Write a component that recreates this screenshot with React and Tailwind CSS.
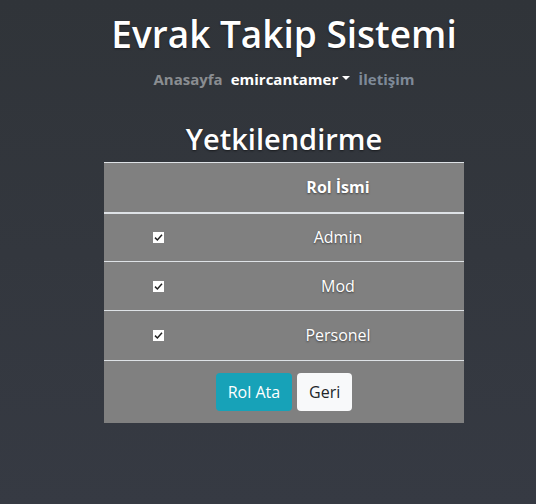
import { useState } from "react";

const roles = ["Admin", "Mod", "Personel"];

const CheckBox = ({ on, onToggle }) => (
  <span
    onClick={onToggle}
    className="inline-flex w-[11px] h-[11px] bg-white items-center justify-center align-middle cursor-pointer mb-[3px]"
  >
    {on && (
      <svg width="9" height="9" viewBox="0 0 9 9">
        <path d="M1 4.6 L3.4 7 L8 1.8" fill="none" stroke="#222" strokeWidth="1.5" />
      </svg>
    )}
  </span>
);

const App = () => {
  const [checked, setChecked] = useState([true, true, true]);
  const shadow = "[text-shadow:0_1px_2px_rgba(0,0,0,0.5)]";

  return (
    <div className="min-h-[504px] pl-8 bg-gradient-to-b from-[#303439] to-[#363a43] font-['Open_Sans','Noto_Sans',sans-serif] text-white flex flex-col items-center">
      {/* Header */}
      <h1 className={`mt-[10px] text-[37px] leading-[48px] font-semibold ${shadow}`}>Evrak Takip Sistemi</h1>
      <nav className="mt-[9px] flex items-center gap-2 text-[15px] font-bold leading-6">
        <a className="text-[#8a8d91]">Anasayfa</a>
        <a className="text-white flex items-center gap-1">
          emircantamer
          <span className="inline-block w-0 h-0 border-l-[4px] border-r-[4px] border-t-[4px] border-l-transparent border-r-transparent border-t-white mb-[2px]"></span>
        </a>
        <a className="text-[#7f8a98]">İletişim</a>
      </nav>

      {/* Role assignment */}
      <h2 className={`mt-[28px] text-[29px] leading-[40px] font-semibold ${shadow}`}>Yetkilendirme</h2>
      <div className={`mt-[3px] w-[360px] bg-[#808080] ${shadow}`}>
        <table className="w-full border-collapse text-[16px]">
          <thead>
            <tr className="border-t border-[#dee2e6] h-[50px]">
              <th className="w-[108px]"></th>
              <th className="font-bold">Rol İsmi</th>
            </tr>
          </thead>
          <tbody>
            {roles.map((r, i) => (
              <tr key={r} className={`${i === 0 ? "border-t-2" : "border-t"} border-[#dee2e6] h-[49px]`}>
                <td className="text-center">
                  <CheckBox
                    on={checked[i]}
                    onToggle={() => setChecked(checked.map((c, j) => (j === i ? !c : c)))}
                  />
                </td>
                <td className="text-center font-normal">{r}</td>
              </tr>
            ))}
          </tbody>
        </table>
        <div className="border-t border-[#dee2e6] flex justify-center gap-[5px] pt-[12px] pb-[12px]">
          <button className="bg-[#17a2b8] text-white rounded px-3 h-[38px] text-[16px]">Rol Ata</button>
          <button className="bg-[#f8f9fa] text-[#212529] rounded px-3 h-[38px] text-[16px]">Geri</button>
        </div>
      </div>
    </div>
  );
};

export default App;
